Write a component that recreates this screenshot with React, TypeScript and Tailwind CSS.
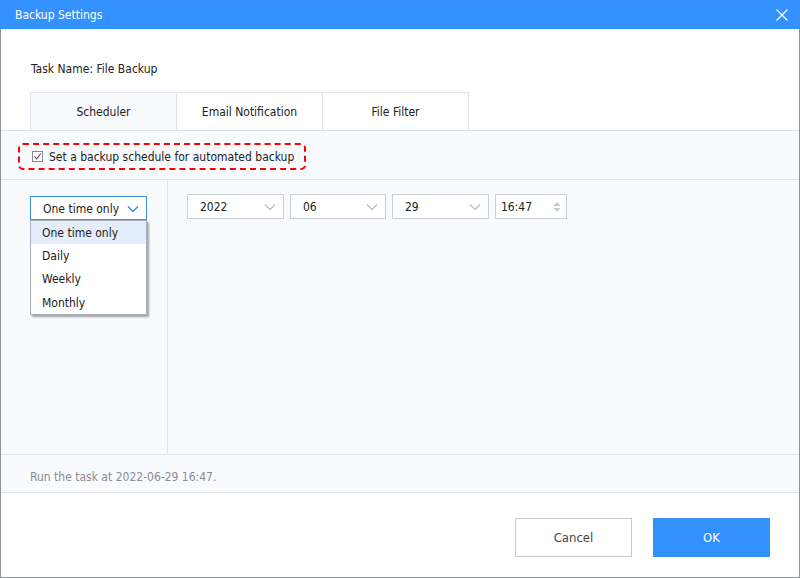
import React from "react";

const font = { fontFamily: '"DejaVu Sans Condensed", "DejaVu Sans", sans-serif', fontStretch: "condensed" as const };

function Chevron({ color = "#b9bfc9" }: { color?: string }) {
  return (
    <svg width="12" height="8" viewBox="0 0 12 8">
      <path d="M1 1.5 L6 6.5 L11 1.5" fill="none" stroke={color} strokeWidth="1.3" />
    </svg>
  );
}

function DateSelect({ value, width }: { value: string; width: string }) {
  return (
    <div className={`${width} h-[25px] border border-[#c9ced7] bg-white flex items-center justify-between pl-[12px] pr-[7px]`}>
      <span className="text-[12px] text-[#222]">{value}</span>
      <Chevron />
    </div>
  );
}

export default function App() {
  return (
    <div className="w-[800px] h-[578px] bg-white flex flex-col text-[#222]" style={font}>
      {/* title bar */}
      <div className="h-[29px] bg-[#3391fe] flex items-center justify-between pl-[15px] pr-[12px] shrink-0">
        <span className="text-white text-[12px]">Backup Settings</span>
        <svg width="12" height="12" viewBox="0 0 12 12">
          <path d="M0.5 0.5 L11.5 11.5 M11.5 0.5 L0.5 11.5" stroke="white" strokeWidth="1.2" />
        </svg>
      </div>
      <div className="flex-1 flex flex-col border-x border-b border-[#8d939c]">
        <div className="h-[63px] pl-[30px] pt-[31px] text-[12px]">Task Name: File Backup</div>
        {/* tabs */}
        <div className="h-[38px] flex pl-[29px]">
          <div className="w-[147px] border-t border-l border-r border-[#dfe4ec] bg-[#f8fafe] flex items-center justify-center pt-[1px] text-[12px]">Scheduler</div>
          <div className="w-[146px] border-t border-r border-[#dfe4ec] bg-white flex items-center justify-center pt-[1px] text-[12px]">Email Notification</div>
          <div className="w-[146px] border-t border-r border-[#dfe4ec] bg-white flex items-center justify-center pt-[1px] text-[12px]">File Filter</div>
        </div>
        {/* checkbox row */}
        <div className="h-[49px] border-t border-[#dfe4ec] bg-[#f8fafe] pl-[17px] pt-[12px]">
          <div className="w-[288px] h-[27px] border-2 border-dashed border-[#f00] rounded-[5px] flex items-center pl-[12px] gap-[6px]">
            <div className="w-[11px] h-[11px] border border-[#8a8a8a] bg-white flex items-center justify-center">
              <svg width="9" height="9" viewBox="0 0 9 9">
                <path d="M1.5 4.5 L3.7 7 L7.8 1.5" fill="none" stroke="#444" strokeWidth="1.1" />
              </svg>
            </div>
            <span className="text-[12px]">Set a backup schedule for automated backup</span>
          </div>
        </div>
        {/* content */}
        <div className="h-[275px] border-t border-[#dfe4ec] bg-[#f8fafe] flex">
          <div className="w-[167px] border-r border-[#dfe4ec] pl-[29px] pt-[16px]">
            <div className="relative w-[117px]">
              <div className="h-[24px] border border-[#3b8fe6] bg-white flex items-center justify-between pl-[12px] pr-[7px] pt-[1px]">
                <span className="text-[12px]">One time only</span>
                <Chevron color="#2f86e8" />
              </div>
              <div className="absolute left-0 top-[24px] w-[117px] bg-white border border-[#a9b1bf] shadow-[2px_2px_2px_rgba(0,0,0,0.35)] text-[12px]">
                <div className="h-[23px] bg-[#e4eefa] flex items-center pl-[11px]">One time only</div>
                <div className="h-[23px] flex items-center pl-[11px]">Daily</div>
                <div className="h-[24px] flex items-center pl-[11px]">Weekly</div>
                <div className="h-[23px] flex items-center pl-[11px]">Monthly</div>
              </div>
            </div>
          </div>
          <div className="flex-1 pl-[19px] pt-[14px] flex gap-[6px] items-start">
            <DateSelect value="2022" width="w-[97px]" />
            <DateSelect value="06" width="w-[96px]" />
            <DateSelect value="29" width="w-[97px]" />
            <div className="w-[72px] h-[25px] border border-[#c9ced7] bg-white flex items-center justify-between pl-[5px] pr-[5px]">
              <span className="text-[12px]">16:47</span>
              <svg width="8" height="12" viewBox="0 0 8 12">
                <path d="M0.5 5 L4 1 L7.5 5 Z M0.5 7 L4 11 L7.5 7 Z" fill="#c3c8d0" />
              </svg>
            </div>
          </div>
        </div>
        {/* run row */}
        <div className="h-[39px] border-t border-b border-[#dfe4ec] bg-[#f8fafe] pl-[29px] pt-[15px] text-[12px] leading-[14px] text-[#8c8c8c]">
          Run the task at 2022-06-29 16:47.
        </div>
        {/* footer */}
        <div className="flex-1 flex justify-end items-start pt-[25px] pr-[29px] gap-[21px]">
          <button className="w-[117px] h-[39px] border border-[#c6cbd4] bg-white text-[13px] text-[#444]">Cancel</button>
          <button className="w-[117px] h-[39px] bg-[#3391fe] border border-[#3a8ff0] text-[13px] text-white">OK</button>
        </div>
      </div>
    </div>
  );
}
